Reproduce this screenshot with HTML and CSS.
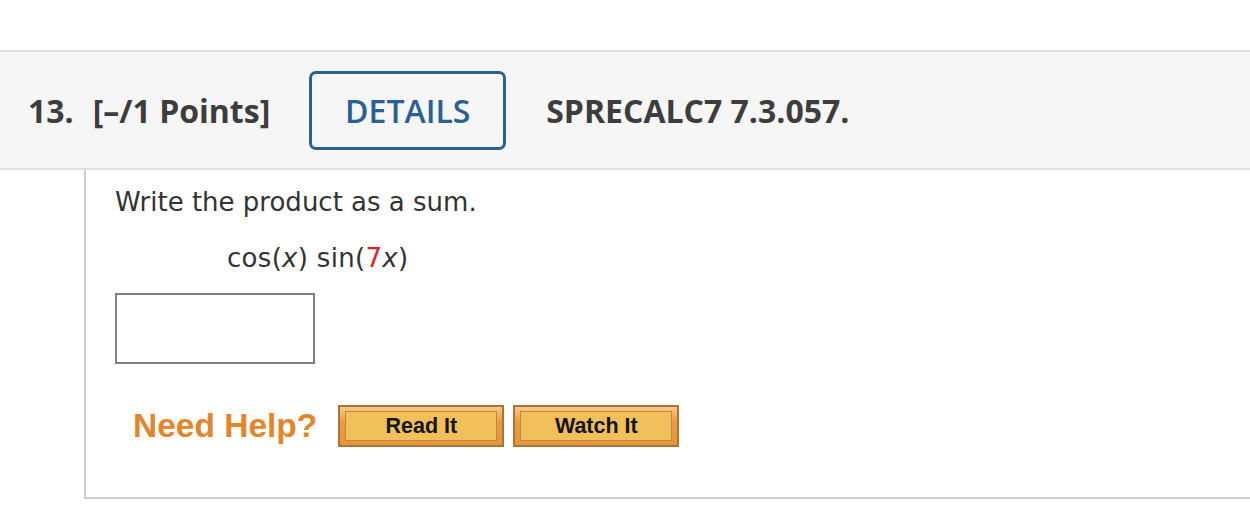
FILE: index.html
```html
<!DOCTYPE html>
<html>
<head>
<meta charset="utf-8">
<link rel="stylesheet" href="styles.css">
</head>
<body>
<div class="question">
  <div class="q-header">
    <span class="q-num">13.</span>
    <span class="q-points">[–/1 Points]</span>
    <button class="details-btn">DETAILS</button>
    <span class="q-ref">SPRECALC7 7.3.057.</span>
  </div>
  <div class="q-body">
    <p class="prompt">Write the product as a sum.</p>
    <p class="expr">cos(<i>x</i>) sin(<span class="red">7</span><i>x</i>)</p>
    <div class="answer-box"></div>
    <div class="help-row">
      <span class="need-help">Need Help?</span>
      <span class="help-btn"><span class="help-inner">Read It</span></span>
      <span class="help-btn"><span class="help-inner">Watch It</span></span>
    </div>
  </div>
</div>
</body>
</html>
```
FILE: styles.css
```css
html, body {
  margin: 0;
  padding: 0;
  background: #fff;
}
.question {
  padding-top: 50px;
}
.q-header {
  display: flex;
  align-items: center;
  height: 116px;
  background: #f6f6f6;
  border-top: 2px solid #dedede;
  border-bottom: 2px solid #dedede;
  padding-left: 28px;
  font-family: "Open Sans", sans-serif;
  font-size: 32px;
  color: #3d3d3d;
}
.q-num {
  font-weight: 700;
  margin-right: 19px;
}
.q-points {
  font-weight: 700;
  margin-right: 39px;
}
.details-btn {
  box-sizing: border-box;
  width: 197px;
  height: 79px;
  border: 3px solid #2a6096;
  border-radius: 7px;
  background: transparent;
  color: #2a6096;
  font-family: "Open Sans", sans-serif;
  font-size: 32px;
  font-weight: 600;
  padding: 0;
  margin-right: 40px;
}
.q-ref {
  font-weight: 700;
}
.q-body {
  margin-left: 84px;
  border-left: 2px solid #cccccc;
  border-bottom: 2px solid #cccccc;
  padding: 16px 0 0 29px;
  height: 311px;
  font-family: "DejaVu Sans", Verdana, sans-serif;
  font-size: 26px;
  color: #333;
}
.prompt {
  margin: 0;
  line-height: 32px;
}
.expr {
  margin: 24px 0 0 112px;
  line-height: 32px;
  letter-spacing: 0.3px;
}
.red {
  color: #e2231a;
}
.answer-box {
  box-sizing: border-box;
  width: 200px;
  height: 71px;
  border: 2px solid #808080;
  margin-top: 19px;
}
.help-row {
  display: flex;
  align-items: center;
  margin-top: 41px;
}
.need-help {
  font-family: "Liberation Sans", Arial, sans-serif;
  font-weight: 700;
  font-size: 33.5px;
  color: #e3862b;
  margin-left: 18px;
  margin-right: 21px;
}
.help-btn {
  box-sizing: border-box;
  display: flex;
  width: 166px;
  height: 42px;
  border: 2px solid #a9753a;
  background: linear-gradient(#f7c98a, #eb9b3e 40%, #e8953a);
  padding: 4px 5px;
  margin-right: 9px;
}
.help-inner {
  flex: 1;
  display: flex;
  align-items: center;
  justify-content: center;
  border: 1px solid #b98a45;
  background: #f2c05b;
  font-family: "Liberation Sans", Arial, sans-serif;
  font-weight: 700;
  font-size: 21.5px;
  color: #141414;
}
```
